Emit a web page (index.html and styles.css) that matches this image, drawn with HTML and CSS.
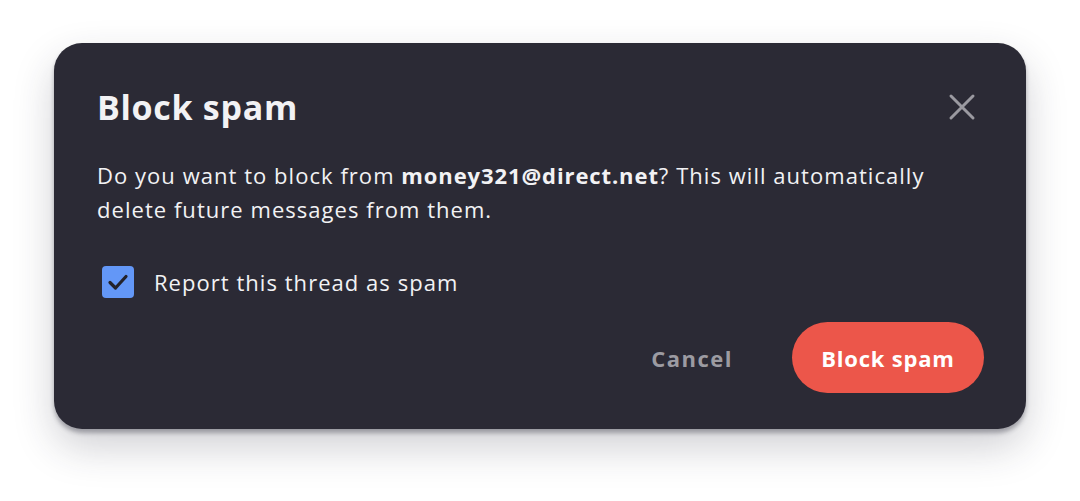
FILE: index.html
```html
<!DOCTYPE html>
<html>
<head>
<meta charset="utf-8">
<link rel="stylesheet" href="styles.css">
</head>
<body>
<div class="dialog">
  <div class="header">
    <h1 class="title">Block spam</h1>
    <button class="close" aria-label="Close">
      <svg width="28" height="28" viewBox="0 0 28 28"><path d="M3 3L25 25M25 3L3 25" stroke="#9b9aa1" stroke-width="3" stroke-linecap="round" fill="none"/></svg>
    </button>
  </div>
  <p class="message">Do you want to block from <strong>money321@direct.net</strong>? This will automatically delete future messages from them.</p>
  <label class="check-row">
    <span class="checkbox">
      <svg width="24" height="24" viewBox="0 0 24 24"><path d="M4 12.5L9.5 18L20 6.5" stroke="#23222b" stroke-width="3.2" stroke-linecap="round" stroke-linejoin="round" fill="none"/></svg>
    </span>
    <span class="check-label">Report this thread as spam</span>
  </label>
  <div class="actions">
    <button class="btn-cancel">Cancel</button>
    <button class="btn-primary">Block spam</button>
  </div>
</div>
</body>
</html>
```
FILE: styles.css
```css
* { box-sizing: border-box; }
html, body { margin: 0; padding: 0; }
body {
  background: #ffffff;
  font-family: "Open Sans", "Liberation Sans", sans-serif;
  width: 1080px;
  height: 501px;
  overflow: hidden;
}
.dialog {
  margin: 43px 0 0 54px;
  width: 972px;
  height: 386px;
  background: #2b2a35;
  border-radius: 28px;
  padding: 42px 42px 36px 43px;
  display: flex;
  flex-direction: column;
  box-shadow: 0 4px 4px rgba(40, 40, 55, 0.35), 0 18px 40px rgba(40, 40, 60, 0.22);
  color: #f2f2f4;
}
.header {
  display: flex;
  justify-content: space-between;
  align-items: flex-start;
}
.title {
  margin: 0;
  font-size: 34px;
  line-height: 44px;
  font-weight: 700;
  color: #f2f2f4;
  letter-spacing: 0.7px;
}
.close {
  background: none;
  border: 0;
  padding: 0;
  margin: 8px 8px 0 0;
  width: 28px;
  height: 28px;
  display: flex;
}
.message {
  margin: 29px 0 0 0;
  font-size: 22px;
  line-height: 34px;
  color: #f2f2f4;
  letter-spacing: 1.04px;
  max-width: 850px;
}
.message strong { font-weight: 700; letter-spacing: 0.9px; }
.check-row {
  margin-top: 40px;
  display: flex;
  align-items: center;
  gap: 20px;
  padding-left: 5px;
}
.checkbox {
  width: 32px;
  height: 32px;
  border-radius: 4px;
  background: #6397f7;
  display: flex;
  align-items: center;
  justify-content: center;
}
.check-label {
  font-size: 22px;
  line-height: 32px;
  color: #f2f2f4;
  letter-spacing: 1.04px;
}
.actions {
  margin-top: auto;
  display: flex;
  justify-content: flex-end;
  align-items: center;
  gap: 35px;
}
.btn-cancel {
  background: none;
  border: 0;
  font-family: inherit;
  font-size: 22px;
  font-weight: 700;
  color: #9c9ba2;
  letter-spacing: 1.5px;
  padding: 0 24px;
  height: 71px;
}
.btn-primary {
  background: #ec564a;
  border: 0;
  border-radius: 36px;
  width: 192px;
  height: 71px;
  font-family: inherit;
  font-size: 22px;
  font-weight: 700;
  color: #ffffff;
  letter-spacing: 0.8px;
}
```
